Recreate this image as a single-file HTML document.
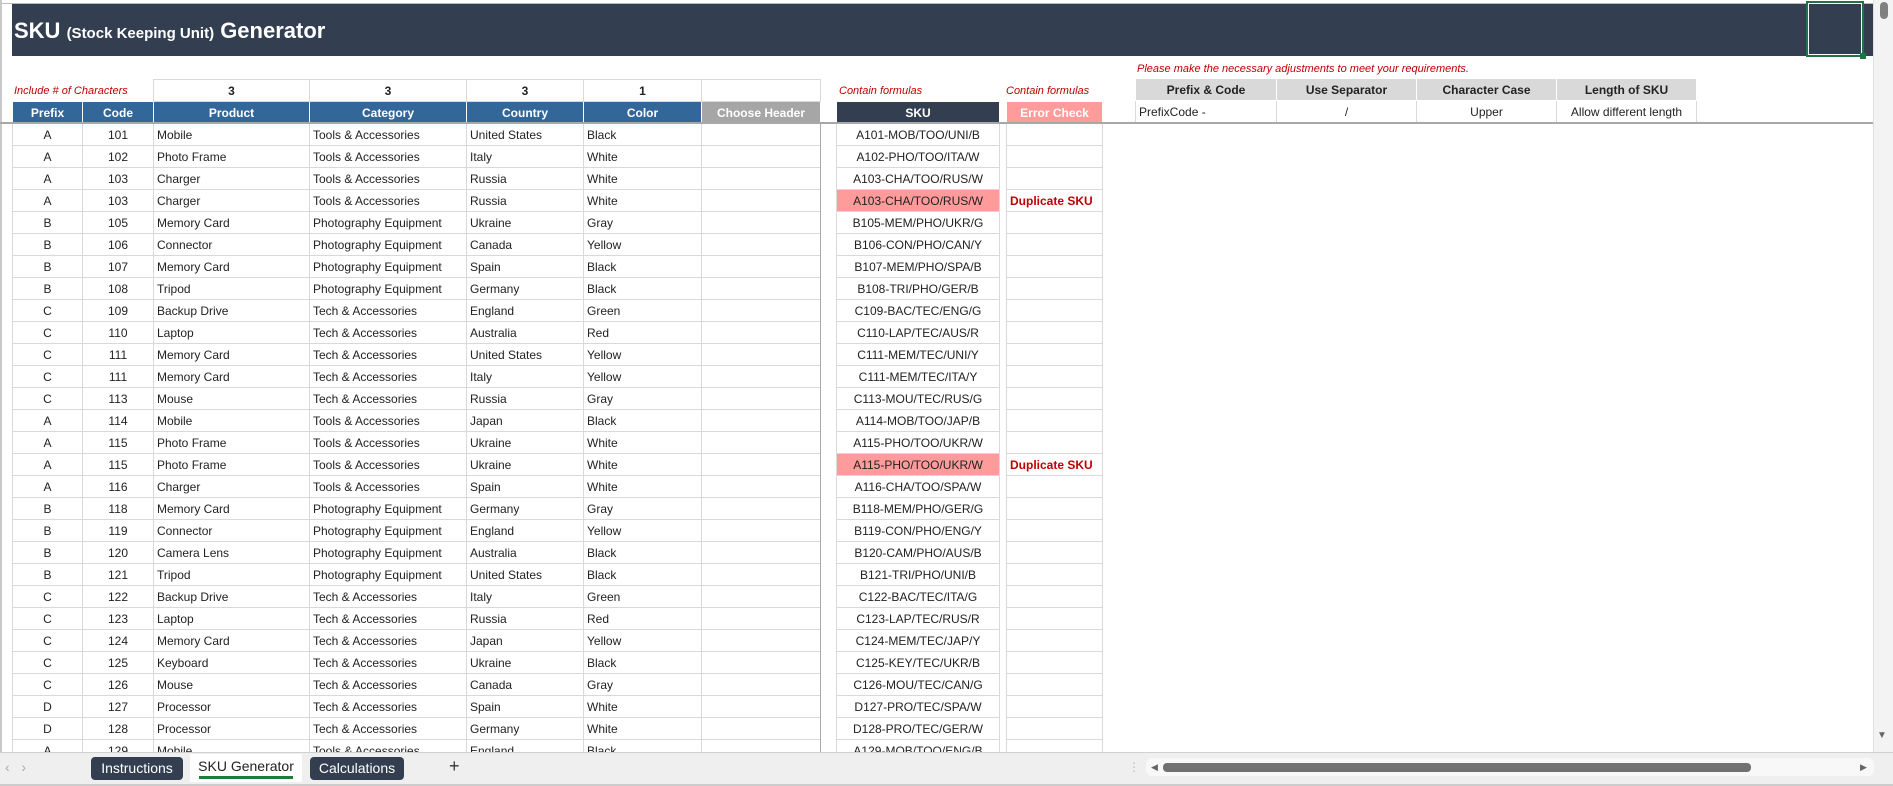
<!DOCTYPE html>
<html><head><meta charset="utf-8">
<style>
*{margin:0;padding:0;box-sizing:border-box}
body{width:1893px;height:786px;overflow:hidden;background:#fff;font-family:"Liberation Sans",Arial,sans-serif;font-size:12px;color:#222;position:relative}
.abs{position:absolute}
table{border-collapse:collapse;table-layout:fixed;position:absolute}
td{height:22px;border:1px solid #d9d9d9;white-space:nowrap;overflow:hidden;padding:0 3px;font-size:12px;line-height:20px}
.c{text-align:center}
.hd td{color:#fff;font-weight:bold;background:#336699;border-color:#fff;text-align:center}
.num td{font-weight:bold;text-align:center;border-color:#d9d9d9}
.red{color:#c00000;font-style:italic;font-size:11px}
.pink{background:#ff9b9b}
.dup{color:#c00000;font-weight:bold}
</style></head><body>
<div class="abs" style="left:0;top:0;width:1873px;height:4px;border-bottom:1px solid #bbb"></div>
<div class="abs" style="left:0;top:0;width:2px;height:752px;background:#c8c8c8"></div>
<div class="abs" style="left:12px;top:4px;width:1861px;height:52px;background:#333f50"></div>
<div class="abs" style="left:14px;top:17px;color:#fff;font-weight:bold;font-size:22px;line-height:28px">SKU <span style="font-size:15px">(Stock Keeping Unit)</span> Generator</div>
<div class="abs" style="left:1806px;top:1px;width:58px;height:56px;border:2px solid #217346;box-shadow:inset 0 0 0 1px #fff"></div>
<div class="abs" style="left:1860px;top:53px;width:6px;height:6px;background:#217346"></div>

<div class="abs red" style="left:14px;top:85px">Include # of Characters</div>
<div class="abs red" style="left:839px;top:85px">Contain formulas</div>
<div class="abs red" style="left:1006px;top:85px">Contain formulas</div>
<div class="abs red" style="left:1137px;top:63px">Please make the necessary adjustments to meet your requirements.</div>

<table style="left:12px;top:79px">
<colgroup><col style="width:70px"><col style="width:71px"><col style="width:156px"><col style="width:157px"><col style="width:117px"><col style="width:118px"><col style="width:119px"></colgroup>
<tr class="num"><td style="border:none"></td><td style="border:none;border-right:1px solid #d9d9d9"></td><td>3</td><td>3</td><td>3</td><td>1</td><td></td></tr>
<tr class="hd"><td>Prefix</td><td>Code</td><td>Product</td><td>Category</td><td>Country</td><td>Color</td><td style="background:#a6a6a6">Choose Header</td></tr>
<tr><td class="c">A</td><td class="c">101</td><td>Mobile</td><td>Tools &amp; Accessories</td><td>United States</td><td>Black</td><td></td></tr>
<tr><td class="c">A</td><td class="c">102</td><td>Photo Frame</td><td>Tools &amp; Accessories</td><td>Italy</td><td>White</td><td></td></tr>
<tr><td class="c">A</td><td class="c">103</td><td>Charger</td><td>Tools &amp; Accessories</td><td>Russia</td><td>White</td><td></td></tr>
<tr><td class="c">A</td><td class="c">103</td><td>Charger</td><td>Tools &amp; Accessories</td><td>Russia</td><td>White</td><td></td></tr>
<tr><td class="c">B</td><td class="c">105</td><td>Memory Card</td><td>Photography Equipment</td><td>Ukraine</td><td>Gray</td><td></td></tr>
<tr><td class="c">B</td><td class="c">106</td><td>Connector</td><td>Photography Equipment</td><td>Canada</td><td>Yellow</td><td></td></tr>
<tr><td class="c">B</td><td class="c">107</td><td>Memory Card</td><td>Photography Equipment</td><td>Spain</td><td>Black</td><td></td></tr>
<tr><td class="c">B</td><td class="c">108</td><td>Tripod</td><td>Photography Equipment</td><td>Germany</td><td>Black</td><td></td></tr>
<tr><td class="c">C</td><td class="c">109</td><td>Backup Drive</td><td>Tech &amp; Accessories</td><td>England</td><td>Green</td><td></td></tr>
<tr><td class="c">C</td><td class="c">110</td><td>Laptop</td><td>Tech &amp; Accessories</td><td>Australia</td><td>Red</td><td></td></tr>
<tr><td class="c">C</td><td class="c">111</td><td>Memory Card</td><td>Tech &amp; Accessories</td><td>United States</td><td>Yellow</td><td></td></tr>
<tr><td class="c">C</td><td class="c">111</td><td>Memory Card</td><td>Tech &amp; Accessories</td><td>Italy</td><td>Yellow</td><td></td></tr>
<tr><td class="c">C</td><td class="c">113</td><td>Mouse</td><td>Tech &amp; Accessories</td><td>Russia</td><td>Gray</td><td></td></tr>
<tr><td class="c">A</td><td class="c">114</td><td>Mobile</td><td>Tools &amp; Accessories</td><td>Japan</td><td>Black</td><td></td></tr>
<tr><td class="c">A</td><td class="c">115</td><td>Photo Frame</td><td>Tools &amp; Accessories</td><td>Ukraine</td><td>White</td><td></td></tr>
<tr><td class="c">A</td><td class="c">115</td><td>Photo Frame</td><td>Tools &amp; Accessories</td><td>Ukraine</td><td>White</td><td></td></tr>
<tr><td class="c">A</td><td class="c">116</td><td>Charger</td><td>Tools &amp; Accessories</td><td>Spain</td><td>White</td><td></td></tr>
<tr><td class="c">B</td><td class="c">118</td><td>Memory Card</td><td>Photography Equipment</td><td>Germany</td><td>Gray</td><td></td></tr>
<tr><td class="c">B</td><td class="c">119</td><td>Connector</td><td>Photography Equipment</td><td>England</td><td>Yellow</td><td></td></tr>
<tr><td class="c">B</td><td class="c">120</td><td>Camera Lens</td><td>Photography Equipment</td><td>Australia</td><td>Black</td><td></td></tr>
<tr><td class="c">B</td><td class="c">121</td><td>Tripod</td><td>Photography Equipment</td><td>United States</td><td>Black</td><td></td></tr>
<tr><td class="c">C</td><td class="c">122</td><td>Backup Drive</td><td>Tech &amp; Accessories</td><td>Italy</td><td>Green</td><td></td></tr>
<tr><td class="c">C</td><td class="c">123</td><td>Laptop</td><td>Tech &amp; Accessories</td><td>Russia</td><td>Red</td><td></td></tr>
<tr><td class="c">C</td><td class="c">124</td><td>Memory Card</td><td>Tech &amp; Accessories</td><td>Japan</td><td>Yellow</td><td></td></tr>
<tr><td class="c">C</td><td class="c">125</td><td>Keyboard</td><td>Tech &amp; Accessories</td><td>Ukraine</td><td>Black</td><td></td></tr>
<tr><td class="c">C</td><td class="c">126</td><td>Mouse</td><td>Tech &amp; Accessories</td><td>Canada</td><td>Gray</td><td></td></tr>
<tr><td class="c">D</td><td class="c">127</td><td>Processor</td><td>Tech &amp; Accessories</td><td>Spain</td><td>White</td><td></td></tr>
<tr><td class="c">D</td><td class="c">128</td><td>Processor</td><td>Tech &amp; Accessories</td><td>Germany</td><td>White</td><td></td></tr>
<tr><td class="c">A</td><td class="c">129</td><td>Mobile</td><td>Tools &amp; Accessories</td><td>England</td><td>Black</td><td></td></tr>
</table>

<table style="left:836px;top:101px">
<colgroup><col style="width:163px"><col style="width:3px"><col style="width:96px"></colgroup>
<tr class="hd"><td style="background:#333f50">SKU</td><td style="background:#fff;border:none"></td><td style="background:#ff9b9b">Error Check</td></tr>
<tr><td class="c">A101-MOB/TOO/UNI/B</td><td style="border:none"></td><td></td></tr>
<tr><td class="c">A102-PHO/TOO/ITA/W</td><td style="border:none"></td><td></td></tr>
<tr><td class="c">A103-CHA/TOO/RUS/W</td><td style="border:none"></td><td></td></tr>
<tr><td class="c pink">A103-CHA/TOO/RUS/W</td><td style="border:none"></td><td class="dup">Duplicate SKU</td></tr>
<tr><td class="c">B105-MEM/PHO/UKR/G</td><td style="border:none"></td><td></td></tr>
<tr><td class="c">B106-CON/PHO/CAN/Y</td><td style="border:none"></td><td></td></tr>
<tr><td class="c">B107-MEM/PHO/SPA/B</td><td style="border:none"></td><td></td></tr>
<tr><td class="c">B108-TRI/PHO/GER/B</td><td style="border:none"></td><td></td></tr>
<tr><td class="c">C109-BAC/TEC/ENG/G</td><td style="border:none"></td><td></td></tr>
<tr><td class="c">C110-LAP/TEC/AUS/R</td><td style="border:none"></td><td></td></tr>
<tr><td class="c">C111-MEM/TEC/UNI/Y</td><td style="border:none"></td><td></td></tr>
<tr><td class="c">C111-MEM/TEC/ITA/Y</td><td style="border:none"></td><td></td></tr>
<tr><td class="c">C113-MOU/TEC/RUS/G</td><td style="border:none"></td><td></td></tr>
<tr><td class="c">A114-MOB/TOO/JAP/B</td><td style="border:none"></td><td></td></tr>
<tr><td class="c">A115-PHO/TOO/UKR/W</td><td style="border:none"></td><td></td></tr>
<tr><td class="c pink">A115-PHO/TOO/UKR/W</td><td style="border:none"></td><td class="dup">Duplicate SKU</td></tr>
<tr><td class="c">A116-CHA/TOO/SPA/W</td><td style="border:none"></td><td></td></tr>
<tr><td class="c">B118-MEM/PHO/GER/G</td><td style="border:none"></td><td></td></tr>
<tr><td class="c">B119-CON/PHO/ENG/Y</td><td style="border:none"></td><td></td></tr>
<tr><td class="c">B120-CAM/PHO/AUS/B</td><td style="border:none"></td><td></td></tr>
<tr><td class="c">B121-TRI/PHO/UNI/B</td><td style="border:none"></td><td></td></tr>
<tr><td class="c">C122-BAC/TEC/ITA/G</td><td style="border:none"></td><td></td></tr>
<tr><td class="c">C123-LAP/TEC/RUS/R</td><td style="border:none"></td><td></td></tr>
<tr><td class="c">C124-MEM/TEC/JAP/Y</td><td style="border:none"></td><td></td></tr>
<tr><td class="c">C125-KEY/TEC/UKR/B</td><td style="border:none"></td><td></td></tr>
<tr><td class="c">C126-MOU/TEC/CAN/G</td><td style="border:none"></td><td></td></tr>
<tr><td class="c">D127-PRO/TEC/SPA/W</td><td style="border:none"></td><td></td></tr>
<tr><td class="c">D128-PRO/TEC/GER/W</td><td style="border:none"></td><td></td></tr>
<tr><td class="c">A129-MOB/TOO/ENG/B</td><td style="border:none"></td><td></td></tr>
</table>

<table style="left:1135px;top:78px">
<colgroup><col style="width:141px"><col style="width:140px"><col style="width:140px"><col style="width:140px"></colgroup>
<tr style="background:#d9d9d9;font-weight:bold"><td class="c" style="border-color:#fff">Prefix &amp; Code</td><td class="c" style="border-color:#fff">Use Separator</td><td class="c" style="border-color:#fff">Character Case</td><td class="c" style="border-color:#fff">Length of SKU</td></tr>
<tr><td>PrefixCode -</td><td class="c">/</td><td class="c">Upper</td><td class="c">Allow different length</td></tr>
</table>

<div class="abs" style="left:0;top:122px;width:1873px;height:2px;background:#a8a8a8"></div>
<div class="abs" style="left:820px;top:122px;width:1px;height:630px;background:#a8a8a8"></div>

<div class="abs" style="left:1873px;top:0;width:20px;height:752px;background:#f3f3f3;border-left:1px solid #e0e0e0"></div>
<div class="abs" style="left:1880px;top:2px;width:8px;height:17px;background:#808080;border-radius:4px"></div>
<div class="abs" style="left:1877px;top:730px;color:#666;font-size:10px">▼</div>

<div class="abs" style="left:0;top:752px;width:1893px;height:34px;background:#efefef;border-top:1px solid #d0d0d0;border-bottom:2px solid #ccc"></div>
<div class="abs" style="left:5px;top:759px;color:#aaa;font-size:14px">‹ &nbsp; ›</div>
<div class="abs" style="left:91px;top:757px;width:92px;height:23px;background:#333f50;border-radius:4px;color:#fff;font-size:14px;line-height:23px;text-align:center">Instructions</div>
<div class="abs" style="left:190px;top:754px;width:112px;height:28px;background:#fff;color:#222;font-size:14px;line-height:24px;text-align:center">SKU Generator<div style="position:absolute;left:9px;right:9px;bottom:3px;height:3px;background:#1e7b3c"></div></div>
<div class="abs" style="left:310px;top:757px;width:94px;height:23px;background:#333f50;border-radius:4px;color:#fff;font-size:14px;line-height:23px;text-align:center">Calculations</div>
<div class="abs" style="left:449px;top:756px;color:#333;font-size:18px">+</div>
<div class="abs" style="left:1128px;top:760px;color:#bbb;font-size:12px">⋮</div>
<div class="abs" style="left:1146px;top:758px;width:728px;height:18px;background:#f8f8f8;border-radius:6px"></div>
<div class="abs" style="left:1151px;top:762px;color:#666;font-size:9px">◀</div>
<div class="abs" style="left:1163px;top:763px;width:588px;height:9px;background:#717171;border-radius:4px"></div>
<div class="abs" style="left:1860px;top:762px;color:#666;font-size:9px">▶</div>
</body></html>
